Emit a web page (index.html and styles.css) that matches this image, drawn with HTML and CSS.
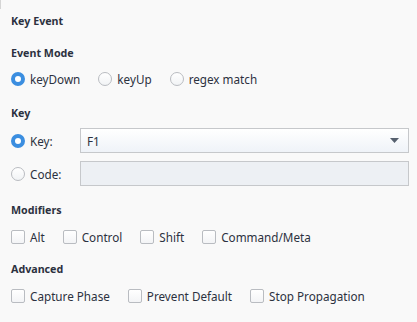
FILE: index.html
```html
<!DOCTYPE html>
<html>
<head>
<meta charset="utf-8">
<link rel="stylesheet" href="styles.css">
</head>
<body>
<div class="edge"></div>
<div class="panel">
  <div class="title">Key Event</div>

  <div class="heading h-mode">Event Mode</div>
  <div class="row">
    <label class="opt"><span class="radio checked"></span>keyDown</label>
    <label class="opt"><span class="radio"></span>keyUp</label>
    <label class="opt"><span class="radio"></span>regex match</label>
  </div>

  <div class="heading h-key">Key</div>
  <div class="field-row first">
    <label class="opt field-label"><span class="radio checked"></span>Key:</label>
    <div class="input select">
      <span class="value">F1</span>
      <svg class="caret" width="9" height="5" viewBox="0 0 9 5"><path d="M0 0H9L4.5 5Z" fill="#56606e"/></svg>
    </div>
  </div>
  <div class="field-row">
    <label class="opt field-label"><span class="radio"></span>Code:</label>
    <div class="input disabled"></div>
  </div>

  <div class="heading h-mod">Modifiers</div>
  <div class="row row-check">
    <label class="opt"><span class="check"></span>Alt</label>
    <label class="opt"><span class="check"></span>Control</label>
    <label class="opt"><span class="check"></span>Shift</label>
    <label class="opt"><span class="check"></span>Command/Meta</label>
  </div>

  <div class="heading h-adv">Advanced</div>
  <div class="row row-check">
    <label class="opt"><span class="check"></span>Capture Phase</label>
    <label class="opt"><span class="check"></span>Prevent Default</label>
    <label class="opt"><span class="check"></span>Stop Propagation</label>
  </div>
</div>
</body>
</html>
```

FILE: styles.css
```css
html, body {
  margin: 0;
  padding: 0;
  background: #f9f9f9;
}
body {
  font-family: "Noto Sans", "Open Sans", sans-serif;
  color: #2c3140;
  font-size: 11.7px;
  width: 417px;
  height: 322px;
  overflow: hidden;
  position: relative;
}
.edge {
  position: absolute;
  left: 0;
  top: 0;
  width: 1px;
  height: 9px;
  background: #d5d5d5;
}
.panel {
  padding: 13px 8px 0 11px;
  display: flex;
  flex-direction: column;
}
.title,
.heading {
  font-weight: bold;
  font-size: 10.7px;
  line-height: 16px;
}
.h-mode { margin-top: 16px; }
.h-key { margin-top: 16px; }
.h-mod { margin-top: 16px; }
.h-adv { margin-top: 14px; }
.row {
  display: flex;
  margin-top: 8px;
  height: 20px;
  align-items: center;
}
.row-check { margin-top: 9px; }
.opt {
  display: flex;
  align-items: center;
  line-height: 18px;
  margin-right: 18px;
  white-space: nowrap;
}
.radio {
  width: 12px;
  height: 12px;
  border: 1px solid #b9bcc1;
  border-radius: 50%;
  background: linear-gradient(#ffffff, #f1f3f5);
  margin-right: 5px;
  flex: none;
}
.radio.checked {
  width: 6px;
  height: 6px;
  border: 4px solid #3b8ee0;
  background: #ffffff;
}
.check {
  width: 12px;
  height: 12px;
  border: 1px solid #b9bcc1;
  border-radius: 2px;
  background: linear-gradient(#ffffff, #f3f4f6);
  margin-right: 5px;
  flex: none;
}
.field-row {
  display: flex;
  align-items: center;
  margin-top: 8px;
}
.field-row.first { margin-top: 7px; }
.field-label {
  width: 69px;
  margin-right: 0;
}
.input {
  flex: 1;
  height: 23px;
  border: 1px solid #c6c8cb;
  display: flex;
  align-items: center;
  padding: 0 9px 0 6px;
}
.select {
  background: linear-gradient(#ffffff, #eff3f8);
  justify-content: space-between;
}
.disabled {
  background: #edf0f4;
}
```
